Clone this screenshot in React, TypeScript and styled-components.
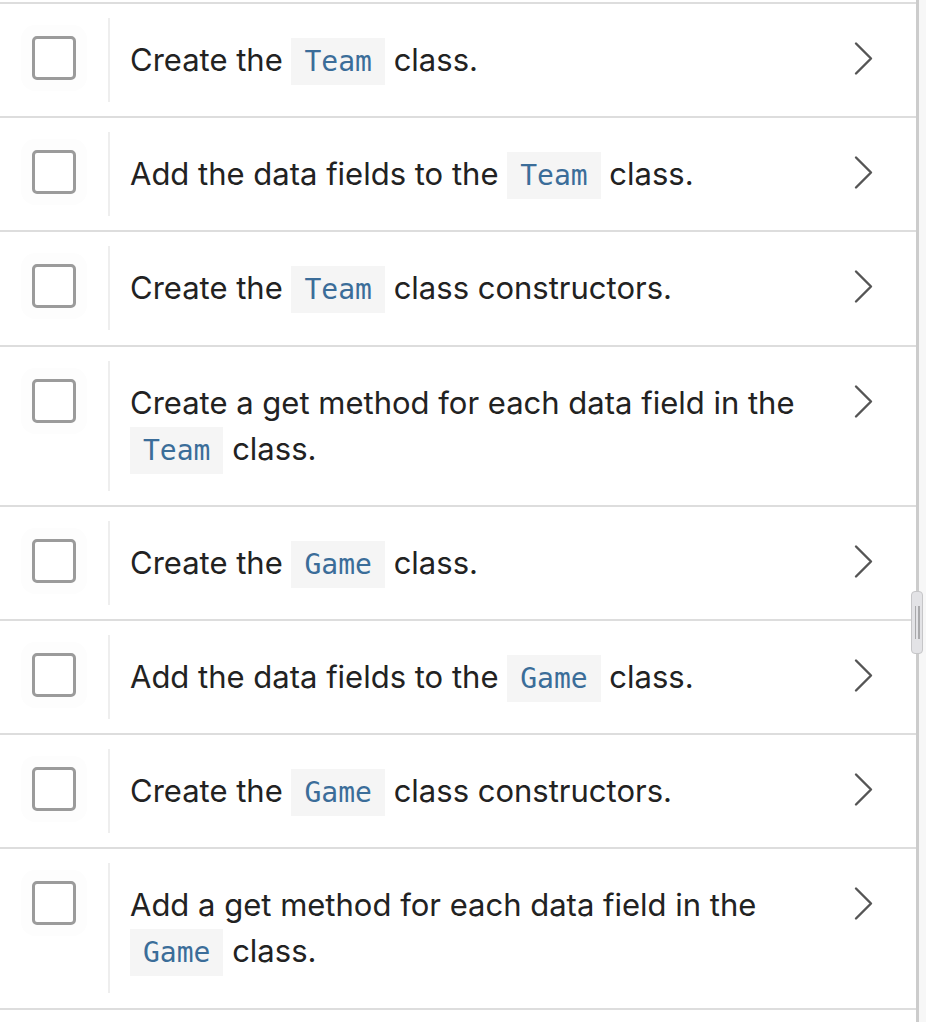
import React from "react";
import styled, { createGlobalStyle } from "styled-components";

const Global = createGlobalStyle`
  html, body { margin: 0; padding: 0; background: #f7f7f7; }
  body { font-family: Inter, "Noto Sans", sans-serif; }
`;

const Panel = styled.div`
  position: relative;
  box-sizing: border-box;
  width: 919px;
  min-height: 1022px;
  padding-top: 2px;
  background: #ffffff;
  border-right: 3px solid #cccccc;
`;

const List = styled.ul`
  list-style: none;
  margin: 0;
  padding: 0;
  border-top: 2px solid #dddddd;
`;

const Row = styled.li`
  display: flex;
  align-items: stretch;
  padding: 14px 0 14.2px;
  border-bottom: 2px solid #dddddd;
`;

const CheckCell = styled.div`
  box-sizing: border-box;
  width: 110px;
  flex: none;
  padding: 18px 0 0 32px;
  border-right: 2px solid #eeeeee;
`;

const Check = styled.span`
  display: block;
  box-sizing: border-box;
  width: 44px;
  height: 44px;
  border: 3px solid #9b9b9b;
  border-radius: 5px;
  background: #ffffff;
  box-shadow: 0 0 0 11px #fdfdfd;
`;

const Text = styled.div`
  flex: 1;
  padding: 19px 34px 19px 20px;
  font-size: 31px;
  line-height: 46px;
  letter-spacing: 0;
  color: #222222;
`;

const Code = styled.code`
  font-family: "DejaVu Sans Mono", "Liberation Mono", monospace;
  font-size: 28px;
  line-height: 1;
  color: #3b6d99;
  background: #f5f5f5;
  padding: 7px 13px;
`;

const ChevronCell = styled.div`
  width: 62px;
  flex: none;
  padding-top: 23px;
  box-sizing: border-box;
`;

const Thumb = styled.div`
  position: absolute;
  top: 591px;
  left: 911px;
  width: 12px;
  height: 63px;
  box-sizing: border-box;
  background: #e3e3e6;
  border: 1px solid #c6c6c8;
  border-radius: 4px;
  display: flex;
  justify-content: center;
  align-items: center;
  gap: 2px;
`;

const Grip = styled.span`
  width: 1.5px;
  height: 33px;
  background: #a9a9ab;
`;

const Chevron = () => (
  <svg width="22" height="36" viewBox="0 0 22 36" fill="none">
    <path d="M2 2.5 L17 17.5 L2 32.5" stroke="#555555" strokeWidth="2.4" strokeLinecap="round" strokeLinejoin="round" />
  </svg>
);

type Item = { before: string; code: string; after: string };

const items: Item[] = [
  { before: "Create the", code: "Team", after: "class." },
  { before: "Add the data fields to the", code: "Team", after: "class." },
  { before: "Create the", code: "Team", after: "class constructors." },
  { before: "Create a get method for each data field in the", code: "Team", after: "class." },
  { before: "Create the", code: "Game", after: "class." },
  { before: "Add the data fields to the", code: "Game", after: "class." },
  { before: "Create the", code: "Game", after: "class constructors." },
  { before: "Add a get method for each data field in the", code: "Game", after: "class." },
];

export default function App() {
  return (
    <>
      <Global />
      <Panel>
        <List>
          {items.map((it, i) => (
            <Row key={i}>
              <CheckCell>
                <Check />
              </CheckCell>
              <Text>
                {it.before} <Code>{it.code}</Code> {it.after}
              </Text>
              <ChevronCell>
                <Chevron />
              </ChevronCell>
            </Row>
          ))}
        </List>
        <Thumb>
          <Grip />
          <Grip />
        </Thumb>
      </Panel>
    </>
  );
}
